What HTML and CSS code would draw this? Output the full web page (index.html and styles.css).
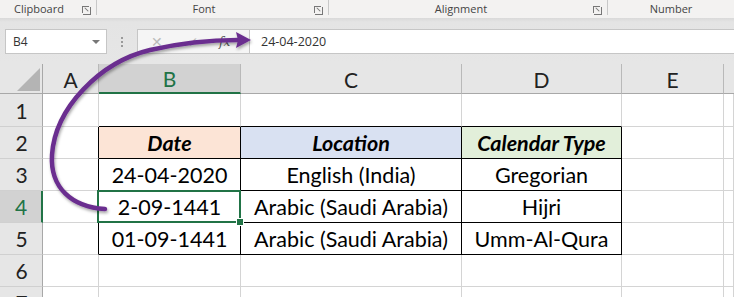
FILE: index.html
```html
<!DOCTYPE html>
<html>
<head>
<meta charset="utf-8">
<link rel="stylesheet" href="styles.css">
</head>
<body>
<div class="app">
  <div class="ribbon">
    <div class="group g-clip"><span>Clipboard</span><i class="launch"></i></div>
    <div class="group g-font"><span>Font</span><i class="launch"></i></div>
    <div class="group g-align"><span>Alignment</span><i class="launch"></i></div>
    <div class="group g-num"><span>Number</span></div>
  </div>
  <div class="fbar">
    <div class="namebox"><span>B4</span><i class="caret"></i></div>
    <div class="dots"><b></b><b></b><b></b></div>
    <div class="fxbox"><span class="x">✕</span><span class="ok">✓</span><span class="fx">fx</span></div>
    <div class="finput">24-04-2020</div>
  </div>
  <div class="grid">
    <div class="corner"><i class="tri"></i></div>
    <div class="ch">A</div><div class="ch sel">B</div><div class="ch">C</div><div class="ch">D</div><div class="ch">E</div><div class="ch last"></div>

    <div class="rh r1">1</div>
    <div class="c r1"></div><div class="c r1 above"></div><div class="c r1 above"></div><div class="c r1 above"></div><div class="c r1"></div><div class="c r1"></div>

    <div class="rh">2</div>
    <div class="c left"></div><div class="c t hd peach">Date</div><div class="c t hd blue">Location</div><div class="c t hd green">Calendar Type</div><div class="c"></div><div class="c"></div>

    <div class="rh">3</div>
    <div class="c left"></div><div class="c t">24-04-2020</div><div class="c t">English (India)</div><div class="c t">Gregorian</div><div class="c"></div><div class="c"></div>

    <div class="rh rsel">4</div>
    <div class="c left"></div><div class="c t active">2-09-1441</div><div class="c t">Arabic (Saudi Arabia)</div><div class="c t">Hijri</div><div class="c"></div><div class="c"></div>

    <div class="rh">5</div>
    <div class="c left"></div><div class="c t">01-09-1441</div><div class="c t">Arabic (Saudi Arabia)</div><div class="c t">Umm-Al-Qura</div><div class="c"></div><div class="c"></div>

    <div class="rh">6</div>
    <div class="c"></div><div class="c"></div><div class="c"></div><div class="c"></div><div class="c"></div><div class="c"></div>

    <div class="rh">7</div>
    <div class="c"></div><div class="c"></div><div class="c"></div><div class="c"></div><div class="c"></div><div class="c"></div>
  </div>
  <svg class="arrow" width="734" height="297" viewBox="0 0 734 297">
    <defs>
      <filter id="sh" x="-20%" y="-20%" width="140%" height="140%">
        <feDropShadow dx="1" dy="2" stdDeviation="1.5" flood-color="#000" flood-opacity="0.35"/>
      </filter>
    </defs>
    <g filter="url(#sh)">
      <path d="M105,209 C72,207 50,188 52,155 C55,108 100,62 150,50 C185,42 210,40 238,40" fill="none" stroke="#6b2d8f" stroke-width="4.5" stroke-linecap="round"/>
      <polygon points="251,40 236,32 238,40 236,48" fill="#6b2d8f"/>
    </g>
  </svg>
</div>
</body>
</html>
```

FILE: styles.css
```css
* { box-sizing: border-box; }
html, body { margin: 0; padding: 0; background: #fff; }
.app { position: relative; width: 734px; height: 297px; overflow: hidden; font-family: Lato, "Noto Sans", sans-serif; }

.ribbon { height: 18px; background: #f3f2f1; display: grid; grid-template-columns: 97px 232px 279px 1fr; font-family: "Open Sans", "Noto Sans", sans-serif; font-size: 11px; color: #444; }
.group { position: relative; display: flex; align-items: center; justify-content: center; border-right: 1px solid #c8c8c8; height: 15px; }
.group span { line-height: 18px; margin-top: 3px; }
.g-clip span { margin-right: 18px; }
.g-font span { margin-right: 17px; }
.g-align span { margin-right: 14px; }
.g-num { border-right: none; }
.launch { position: absolute; right: 5px; top: 7px; width: 8px; height: 8px; border: 1px solid #777; border-top: none; border-left: none; }
.launch::before { content: ""; position: absolute; left: -1px; top: -1px; width: 6px; height: 6px; border-top: 1px solid #777; border-left: 1px solid #777; }
.launch::after { content: ""; position: absolute; left: 1px; top: 2px; width: 5px; height: 1px; background: #777; transform: rotate(45deg); }

.fbar { height: 46px; background: linear-gradient(#d9d9d9 0, #e4e4e4 4px, #e6e6e6 100%); display: flex; align-items: flex-start; padding-top: 11px; font-family: "Open Sans", "Noto Sans", sans-serif; font-size: 12px; color: #333; }
.namebox { margin-left: 5px; width: 102px; height: 25px; background: #fff; border: 1px solid #c6c6c6; display: flex; align-items: center; justify-content: space-between; padding: 0 6px 0 7px; }
.caret { width: 0; height: 0; border-left: 4px solid transparent; border-right: 4px solid transparent; border-top: 4px solid #777; }
.dots { width: 30px; height: 25px; display: flex; flex-direction: column; align-items: center; justify-content: center; gap: 2px; }
.dots b { width: 2px; height: 2px; background: #9a9a9a; display: block; }
.fxbox { width: 112px; height: 25px; background: #f5f5f5; border: 1px solid #c6c6c6; border-right: none; display: flex; align-items: center; padding-left: 13px; }
.fxbox .x { color: #bbb; font-size: 14px; width: 36px; }
.fxbox .ok { color: #bbb; font-size: 14px; width: 32px; }
.fxbox .fx { color: #555; font-style: italic; font-family: "DejaVu Serif", serif; font-size: 12px; }
.finput { flex: 1; height: 25px; background: #fff; border: 1px solid #c6c6c6; border-right: none; padding-left: 11px; line-height: 23px; font-size: 12.5px; }

.grid { display: grid; grid-template-columns: 43px 56px 142px 221px 160px 102px 1fr; grid-template-rows: 30px 33px repeat(6, 32px); }
.corner { background: #e6e6e6; border-right: 1px solid #a8a8a8; border-bottom: 1px solid #a8a8a8; position: relative; }
.tri { position: absolute; left: 17px; top: 4px; width: 0; height: 0; border-left: 23px solid transparent; border-bottom: 23px solid #b4b4b4; }
.ch { background: #e6e6e6; border-right: 1px solid #b9b9b9; border-bottom: 1px solid #a8a8a8; font-size: 21px; color: #222; display: flex; align-items: center; justify-content: center; padding-top: 1px; }
.ch.last { border-right: none; }
.ch.sel { background: #d2d2d2; color: #217346; border-bottom: 2px solid #217346; }
.rh { background: #e6e6e6; border-right: 1px solid #a8a8a8; border-bottom: 1px solid #d0d0d0; font-size: 21px; color: #222; display: flex; align-items: center; justify-content: center; padding-left: 1px; }
.rh.rsel { background: #d2d2d2; color: #217346; border-right: 2px solid #217346; }
.c { border-right: 1px solid #d4d4d4; border-bottom: 1px solid #d4d4d4; font-size: 21.5px; color: #000; display: flex; align-items: center; justify-content: center; white-space: nowrap; }
.c.above { border-bottom-color: #000; }
.c.left { border-right-color: #000; }
.c.t { border-right-color: #000; border-bottom-color: #000; padding-top: 1px; }
.hd { font-weight: 700; font-style: italic; }
.peach { background: #fce4d6; }
.blue { background: #d9e1f2; }
.green { background: #e2efda; }
.active { position: relative; }
.active::before { content: ""; position: absolute; left: -2px; top: -1px; right: -1px; bottom: -1px; border: 2px solid #217346; }
.active::after { content: ""; position: absolute; right: -4px; bottom: -4px; width: 6px; height: 6px; background: #217346; border: 1px solid #fff; }

.arrow { position: absolute; left: 0; top: 0; pointer-events: none; }
```
